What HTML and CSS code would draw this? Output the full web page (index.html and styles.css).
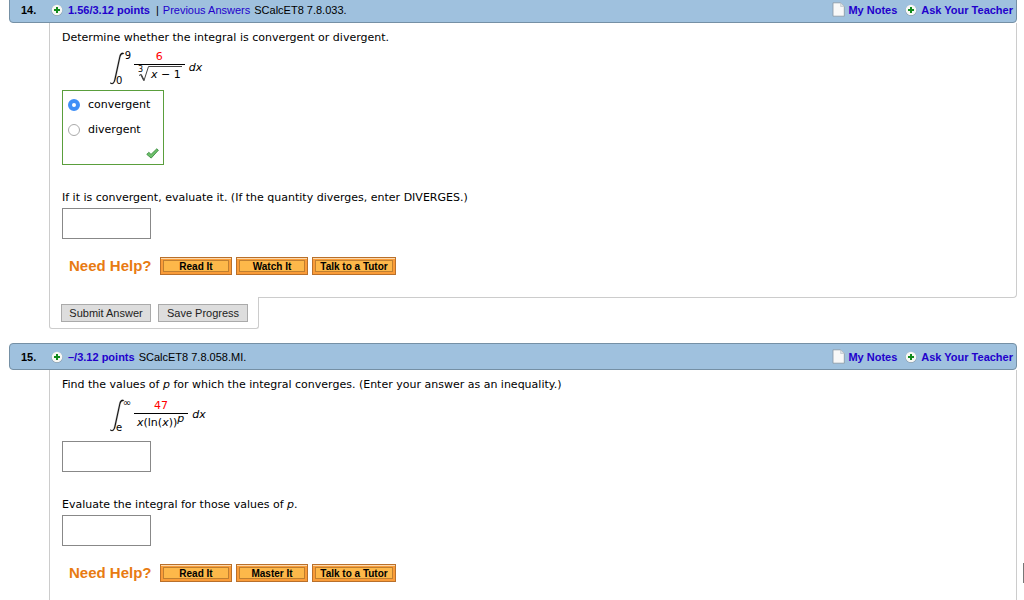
FILE: index.html
```html
<!DOCTYPE html>
<html lang="en">
<head>
    <meta charset="UTF-8">
    <meta name="viewport" content="width=device-width, initial-scale=1.0">
    <title>Assignment</title>
    <link rel="stylesheet" href="styles.css">
</head>
<body>

    <!-- shared icons -->
    <svg class="sprite" aria-hidden="true">
        <symbol id="plus" viewBox="0 0 12 12">
            <circle cx="6" cy="6.4" r="5.5" fill="#8296a6"/>
            <circle cx="6" cy="6" r="5.3" fill="#f7f8f5"/>
            <path d="M6 3V9M3 6H9" stroke="#128a1c" stroke-width="2"/>
        </symbol>
        <symbol id="note" viewBox="0 0 13 15">
            <path d="M1 .8H8.6L12.3 4.5V14.2H1Z" fill="#f8f8f8" stroke="#8595a2" stroke-width=".8"/>
            <path d="M8.6 .8V4.5H12.3Z" fill="#dfe3e6" stroke="#b5bdc4" stroke-width=".6"/>
        </symbol>
        <symbol id="integral" viewBox="0 0 15 34">
            <path d="M.5 31.6Q3.2 34 4.4 28.5L9.3 6Q10.4 .6 14 2.2L13.5 3Q11.1 2.4 10.3 6L5.7 27.5Q4.2 34.8 .3 32.4Z" fill="#111" stroke="#111" stroke-width=".3"/>
        </symbol>
    </svg>

    <section class="question">
        <header class="question-header">
            <span class="number">14.</span>
            <svg class="plus"><use href="#plus"/></svg>
            <a class="points" href="#">1.56/3.12 points</a>
            <span class="divider">|</span>
            <a class="previous" href="#">Previous Answers</a>
            <span class="source">SCalcET8 7.8.033.</span>
            <nav class="tools">
                <a href="#"><svg class="note"><use href="#note"/></svg>My Notes</a>
                <a href="#"><svg class="plus"><use href="#plus"/></svg>Ask Your Teacher</a>
            </nav>
        </header>
        <div class="content">
            <p>Determine whether the integral is convergent or divergent.</p>
            <div class="math">
                <span class="integral">
                    <svg><use href="#integral"/></svg>
                    <span class="upper">9</span>
                    <span class="lower">0</span>
                </span>
                <span class="fraction">
                    <span class="numerator">6</span>
                    <span class="root">
                        <span class="index">3</span>
                        <svg viewBox="0 0 11 16"><path d="M1 9.5L3 8.5L6 14.5L10.5 .5H11" fill="none" stroke="#444"/><path d="M3 8.5L6 14.5" stroke="#444" stroke-width="1.6"/></svg>
                        <span class="radicand"><i>x</i> − 1</span>
                    </span>
                </span>
                <i>dx</i>
            </div>
            <form class="choices">
                <label><input type="radio" name="q14" checked>convergent</label>
                <label><input type="radio" name="q14">divergent</label>
                <svg class="check" viewBox="0 0 13 11"><path d="M.8 6.4L2.8 4.3L5 6.4L10.8 .8L12.4 2.2L5.2 10.1Z" fill="#6cc06a" stroke="#3c8c40" stroke-width=".9"/></svg>
            </form>
            <label class="prompt" for="answer14">If it is convergent, evaluate it. (If the quantity diverges, enter DIVERGES.)</label>
            <input class="answer" type="text" id="answer14">
            <div class="help">
                <span class="help-title">Need Help?</span>
                <button type="button">Read It</button>
                <button type="button">Watch It</button>
                <button type="button" class="tutor">Talk to a Tutor</button>
            </div>
        </div>
        <footer class="actions">
            <button type="button">Submit Answer</button>
            <button type="button">Save Progress</button>
        </footer>
    </section>

    <section class="question">
        <header class="question-header">
            <span class="number">15.</span>
            <svg class="plus"><use href="#plus"/></svg>
            <a class="points" href="#">–/3.12 points</a>
            <span class="source">SCalcET8 7.8.058.MI.</span>
            <nav class="tools">
                <a href="#"><svg class="note"><use href="#note"/></svg>My Notes</a>
                <a href="#"><svg class="plus"><use href="#plus"/></svg>Ask Your Teacher</a>
            </nav>
        </header>
        <div class="content">
            <label for="range15">Find the values of <i>p</i> for which the integral converges. (Enter your answer as an inequality.)</label>
            <div class="math">
                <span class="integral">
                    <svg><use href="#integral"/></svg>
                    <span class="upper">∞</span>
                    <span class="lower">e</span>
                </span>
                <span class="fraction">
                    <span class="numerator">47</span>
                    <span class="denominator"><i>x</i>(ln(<i>x</i>))<sup><i>p</i></sup></span>
                </span>
                <i>dx</i>
            </div>
            <input class="answer" type="text" id="range15">
            <label class="prompt" for="value15">Evaluate the integral for those values of <i>p</i>.</label>
            <input class="answer" type="text" id="value15">
            <div class="help">
                <span class="help-title">Need Help?</span>
                <button type="button">Read It</button>
                <button type="button">Master It</button>
                <button type="button" class="tutor">Talk to a Tutor</button>
            </div>
        </div>
    </section>

    <div class="scroll-mark"></div>

</body>
</html>
```
FILE: styles.css
```css
* {
    box-sizing: border-box;
}
html {
    overflow: hidden;
}
body {
    margin: -4px 7px 0 9px;
    background-color: #fff;
    color: #000;
    font-family: Verdana, "DejaVu Sans", sans-serif;
    font-size: 11px;
    line-height: 14px;
}
p {
    margin: 0;
}
a {
    color: #2200cc;
    text-decoration: none;
}
.sprite {
    display: none;
}
.question {
    margin-bottom: 14px;
}
.question-header {
    display: flex;
    align-items: center;
    height: 27px;
    padding: 0 3px 0 11px;
    border: 1px solid #7590a5;
    border-radius: 4px;
    background-color: #9fc1de;
    font-family: "Liberation Sans", Arial, sans-serif;
    font-size: 11px;
}
.number {
    width: 30px;
    font-weight: bold;
}
.plus {
    width: 12px;
    height: 12px;
    margin-right: 5px;
}
.points {
    font-weight: bold;
}
.divider {
    margin: 0 4px 0 6px;
}
.source {
    margin-left: 4px;
}
.tools {
    display: flex;
    gap: 8px;
    margin-left: auto;
    font-weight: bold;
}
.tools a {
    display: flex;
    align-items: center;
}
.tools .plus {
    margin-right: 4px;
}
.note {
    width: 13px;
    height: 15px;
    margin-right: 3px;
}
.content {
    margin-left: 40px;
    padding: 8px 12px 22px;
    border: 1px solid #ccc;
    border-top: none;
    border-bottom-right-radius: 4px;
}
.math {
    display: flex;
    align-items: center;
    height: 39px;
    margin: 3px 0 3px 48px;
}
.integral {
    display: grid;
    grid-template-columns: 6px 15px;
    height: 34px;
    margin-right: 3px;
    font-size: 10px;
    line-height: 9px;
}
.integral svg {
    grid-area: 1 / 1 / 3 / 3;
    width: 15px;
    height: 34px;
}
.upper {
    grid-area: 1 / 2;
    justify-self: end;
}
.lower {
    grid-area: 2 / 2;
    align-self: end;
}
.fraction {
    display: flex;
    flex-direction: column;
    align-items: center;
    margin-right: 4px;
}
.numerator {
    align-self: stretch;
    border-bottom: 1px solid #000;
    color: #f00;
    text-align: center;
}
.root {
    display: flex;
    margin: 1px 3px 3px 4px;
}
.root svg {
    width: 11px;
    height: 16px;
}
.index {
    width: 4px;
    margin-right: -4px;
    font-size: 8px;
    line-height: 8px;
}
.radicand {
    padding: 1px 1px 0 2px;
    border-top: 1px solid #444;
}
.denominator {
    padding: 2px 4px 0 3px;
}
.denominator sup {
    line-height: 0;
    font-size: 11px;
    vertical-align: 4px;
}
.choices {
    display: flex;
    flex-direction: column;
    width: 102px;
    height: 75px;
    padding: 7px 4px 5px 5px;
    border: 1px solid #5a9e3c;
}
.choices label {
    display: flex;
    align-items: center;
    margin-bottom: 11px;
}
.choices input {
    appearance: none;
    width: 12px;
    height: 12px;
    margin: 0 8px 0 0;
    border: 1px solid #aaa;
    border-radius: 50%;
    background-color: #fff;
}
.choices input:checked {
    border: 4px solid #3f8ff7;
}
.check {
    width: 13px;
    height: 11px;
    margin-left: auto;
}
.prompt {
    display: block;
    margin-top: 26px;
}
.answer {
    display: block;
    width: 89px;
    height: 31px;
    margin: 3px 0 0;
    border: 1px solid #888;
    font-size: 11px;
}
.math + .answer {
    margin-top: 7px;
}
.help {
    display: flex;
    align-items: center;
    gap: 4px;
    margin: 18px 0 0 7px;
}
.help-title {
    width: 87px;
    color: #e87b12;
    font-family: "Liberation Sans", Arial, sans-serif;
    font-size: 15px;
    font-weight: bold;
}
.help button {
    width: 72px;
    height: 18px;
    padding: 0;
    border: 1px solid #b9702b;
    background-color: #fdb84a;
    box-shadow: inset 0 1px #fbd9ae, inset 0 0 0 2px #fa9c38, inset 0 0 0 3px #c07f30;
    color: #000;
    font: bold 10px "Liberation Sans", Arial, sans-serif;
}
.help button.tutor {
    width: 84px;
}
.actions {
    position: relative;
    display: flex;
    gap: 7px;
    width: 210px;
    margin: -1px 0 0 40px;
    padding: 7px 11px 6px;
    border: 1px solid #ccc;
    border-top: none;
    border-radius: 0 0 3px 3px;
    background-color: #fff;
}
.actions button {
    flex: none;
    width: 90px;
    height: 18px;
    padding: 0;
    border: 1px solid #aaa;
    background-color: #ddd;
    color: #222;
    font: 11px "Liberation Sans", Arial, sans-serif;
}
/* sliver of the window scrollbar */
.scroll-mark {
    position: fixed;
    top: 563px;
    right: 0;
    width: 1px;
    height: 20px;
    background-color: #777;
}
```
